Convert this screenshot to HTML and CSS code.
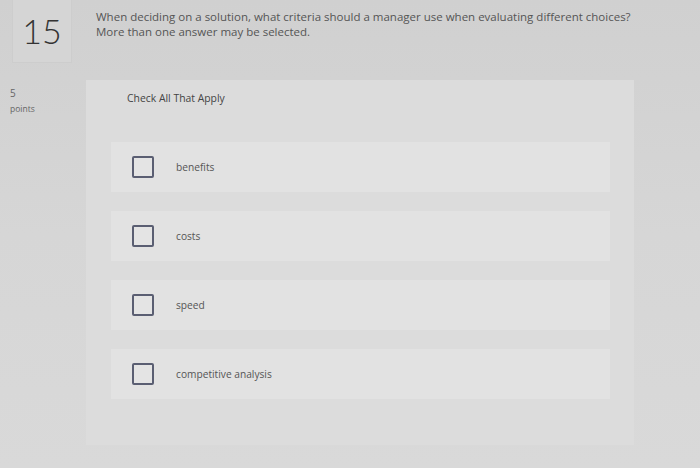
FILE: index.html
```html
<!DOCTYPE html>
<html>
<head>
<meta charset="utf-8">
<link rel="stylesheet" href="styles.css">
</head>
<body>
<div class="page">
  <div class="header">
    <div class="qnum">15</div>
    <div class="qtext">
      <div>When deciding on a solution, what criteria should a manager use when evaluating different choices?</div>
      <div>More than one answer may be selected.</div>
    </div>
  </div>
  <div class="body">
    <div class="points">
      <div class="pnum">5</div>
      <div class="plabel">points</div>
    </div>
    <div class="panel">
      <div class="instr">Check All That Apply</div>
      <div class="options">
        <div class="option"><span class="box"></span><span class="label">benefits</span></div>
        <div class="option"><span class="box"></span><span class="label">costs</span></div>
        <div class="option"><span class="box"></span><span class="label">speed</span></div>
        <div class="option"><span class="box"></span><span class="label">competitive analysis</span></div>
      </div>
    </div>
  </div>
</div>
</body>
</html>
```
FILE: styles.css
```css
html, body {
  margin: 0;
  padding: 0;
}
body {
  width: 700px;
  height: 468px;
  overflow: hidden;
  background: linear-gradient(180deg, #d0d0d0 0%, #d6d6d6 50%, #d9d9d9 100%);
  font-family: "Open Sans", Lato, sans-serif;
  font-variant-ligatures: none;
  color: #4a4a4a;
}
.page {
  display: flex;
  flex-direction: column;
}
.header {
  display: flex;
  align-items: flex-start;
  height: 64px;
}
.qnum {
  margin-left: 12px;
  width: 60px;
  height: 63px;
  box-sizing: border-box;
  border: 1px solid #cdcdcd;
  border-top: none;
  background: #d5d5d5;
  display: flex;
  justify-content: center;
  padding-top: 12px;
  font-family: Lato, sans-serif;
  font-size: 34px;
  line-height: 38px;
  color: #333;
  font-weight: 300;
}
.qtext {
  padding-left: 24px;
  padding-top: 9px;
  font-size: 11.5px;
  line-height: 15px;
  color: #555;
}
.body {
  display: flex;
  margin-top: 16px;
}
.points {
  width: 76px;
  padding-left: 10px;
  padding-top: 7px;
  color: #666;
}
.pnum {
  font-size: 10px;
  line-height: 12px;
}
.plabel {
  font-size: 8.5px;
  line-height: 12px;
  margin-top: 4px;
}
.panel {
  width: 548px;
  height: 365px;
  box-sizing: border-box;
  background: #dcdcdc;
  padding: 11px 24px 0 25px;
}
.instr {
  padding-left: 16px;
  font-size: 10.4px;
  line-height: 14px;
  color: #444;
}
.options {
  display: flex;
  flex-direction: column;
  gap: 19px;
  margin-top: 37px;
}
.option {
  height: 50px;
  background: #e2e2e2;
  display: flex;
  align-items: center;
  padding-left: 21px;
}
.box {
  width: 22px;
  height: 22px;
  box-sizing: border-box;
  border: 2px solid #5a5e72;
  border-radius: 2px;
  background: #e4e4e4;
}
.label {
  margin-left: 22px;
  font-size: 10.2px;
  color: #555;
}
```
